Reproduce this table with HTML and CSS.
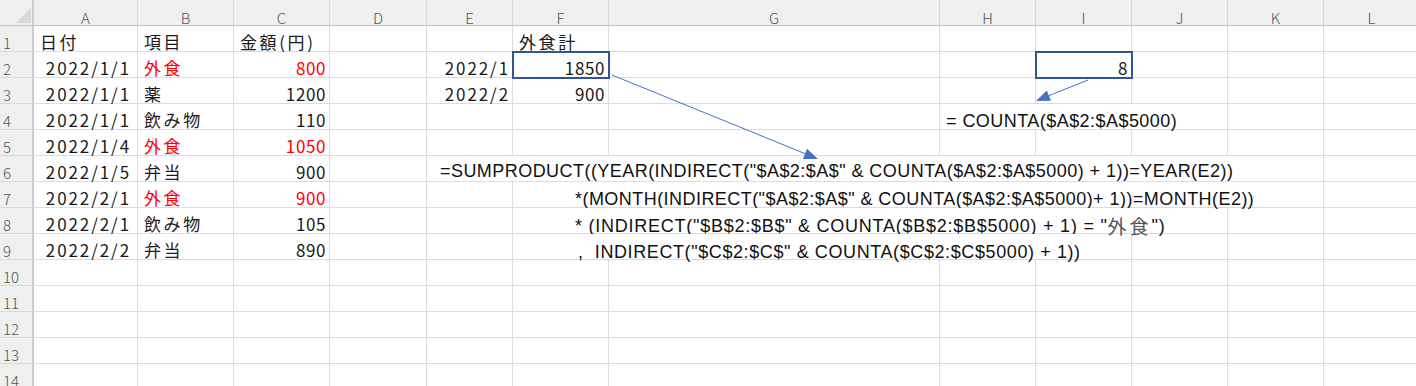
FILE: index.html
```html
<!DOCTYPE html>
<html lang="ja">
<head>
<meta charset="utf-8">
<title>外食計</title>
<link rel="stylesheet" href="styles.css">
</head>
<body>
<div class="sheet">
  <div class="c hd corner"></div><div class="c hd">A</div><div class="c hd">B</div><div class="c hd">C</div><div class="c hd">D</div><div class="c hd">E</div><div class="c hd">F</div><div class="c hd">G</div><div class="c hd">H</div><div class="c hd">I</div><div class="c hd">J</div><div class="c hd">K</div><div class="c hd">L</div>

  <div class="c rh">1</div><div class="c j">日付</div><div class="c j">項目</div><div class="c j">金額(円)</div><div class="c"></div><div class="c"></div><div class="c j">外食計</div><div class="c"></div><div class="c"></div><div class="c"></div><div class="c"></div><div class="c"></div><div class="c"></div>

  <div class="c rh">2</div><div class="c r dt">2022/1/1</div><div class="c j red">外食</div><div class="c r red">800</div><div class="c"></div><div class="c r ym">2022/1</div><div class="c r box">1850</div><div class="c"></div><div class="c"></div><div class="c r box">8</div><div class="c"></div><div class="c"></div><div class="c"></div>

  <div class="c rh">3</div><div class="c r dt">2022/1/1</div><div class="c j">薬</div><div class="c r">1200</div><div class="c"></div><div class="c r ym">2022/2</div><div class="c r">900</div><div class="c"></div><div class="c"></div><div class="c"></div><div class="c"></div><div class="c"></div><div class="c"></div>

  <div class="c rh">4</div><div class="c r dt">2022/1/1</div><div class="c j">飲み物</div><div class="c r">110</div><div class="c"></div><div class="c"></div><div class="c"></div><div class="c"></div><div class="c ovf"><span class="ft f5">= COUNTA($A$2:$A$5000)</span></div><div class="c"></div><div class="c"></div><div class="c"></div><div class="c"></div>

  <div class="c rh">5</div><div class="c r dt">2022/1/4</div><div class="c j red">外食</div><div class="c r red">1050</div><div class="c"></div><div class="c"></div><div class="c"></div><div class="c"></div><div class="c"></div><div class="c"></div><div class="c"></div><div class="c"></div><div class="c"></div>

  <div class="c rh">6</div><div class="c r dt">2022/1/5</div><div class="c j">弁当</div><div class="c r">900</div><div class="c"></div><div class="c ovf"><span class="ft f1">=SUMPRODUCT((YEAR(INDIRECT("$A$2:$A$" &amp; COUNTA($A$2:$A$5000) + 1))=YEAR(E2))</span></div><div class="c"></div><div class="c"></div><div class="c"></div><div class="c"></div><div class="c"></div><div class="c"></div><div class="c"></div>

  <div class="c rh">7</div><div class="c r dt">2022/2/1</div><div class="c j red">外食</div><div class="c r red">900</div><div class="c"></div><div class="c"></div><div class="c ovf"><span class="ft f2">*(MONTH(INDIRECT("$A$2:$A$" &amp; COUNTA($A$2:$A$5000)+ 1))=MONTH(E2))</span></div><div class="c"></div><div class="c"></div><div class="c"></div><div class="c"></div><div class="c"></div><div class="c"></div>

  <div class="c rh">8</div><div class="c r dt">2022/2/1</div><div class="c j">飲み物</div><div class="c r">105</div><div class="c"></div><div class="c"></div><div class="c ovf"><span class="ft f3">* (INDIRECT("$B$2:$B$" &amp; COUNTA($B$2:$B$5000) + 1) = "<span class="jf">外食</span>")</span></div><div class="c"></div><div class="c"></div><div class="c"></div><div class="c"></div><div class="c"></div><div class="c"></div>

  <div class="c rh">9</div><div class="c r dt">2022/2/2</div><div class="c j">弁当</div><div class="c r">890</div><div class="c"></div><div class="c"></div><div class="c ovf"><span class="ft f4">,&nbsp; INDIRECT("$C$2:$C$" &amp; COUNTA($C$2:$C$5000) + 1))</span></div><div class="c"></div><div class="c"></div><div class="c"></div><div class="c"></div><div class="c"></div><div class="c"></div>

  <div class="c rh">10</div><div class="c"></div><div class="c"></div><div class="c"></div><div class="c"></div><div class="c"></div><div class="c"></div><div class="c"></div><div class="c"></div><div class="c"></div><div class="c"></div><div class="c"></div><div class="c"></div>
  <div class="c rh">11</div><div class="c"></div><div class="c"></div><div class="c"></div><div class="c"></div><div class="c"></div><div class="c"></div><div class="c"></div><div class="c"></div><div class="c"></div><div class="c"></div><div class="c"></div><div class="c"></div>
  <div class="c rh">12</div><div class="c"></div><div class="c"></div><div class="c"></div><div class="c"></div><div class="c"></div><div class="c"></div><div class="c"></div><div class="c"></div><div class="c"></div><div class="c"></div><div class="c"></div><div class="c"></div>
  <div class="c rh">13</div><div class="c"></div><div class="c"></div><div class="c"></div><div class="c"></div><div class="c"></div><div class="c"></div><div class="c"></div><div class="c"></div><div class="c"></div><div class="c"></div><div class="c"></div><div class="c"></div>
  <div class="c rh">14</div><div class="c"></div><div class="c"></div><div class="c"></div><div class="c"></div><div class="c"></div><div class="c"></div><div class="c"></div><div class="c"></div><div class="c"></div><div class="c"></div><div class="c"></div><div class="c"></div>

  <svg class="arrows" width="1420" height="390" viewBox="0 0 1420 390">
    <line x1="612" y1="75" x2="806" y2="154" stroke="#4472c4" stroke-width="1"/>
    <polygon points="818,159 803,158.9 807,148.7" fill="#4472c4"/>
    <line x1="1088" y1="80" x2="1049" y2="95.6" stroke="#4472c4" stroke-width="1"/>
    <polygon points="1036,101 1046.8,90.5 1051,100.7" fill="#4472c4"/>
  </svg>
</div>
</body>
</html>
```

FILE: styles.css
```css
html, body {
  margin: 0;
  padding: 0;
  background: #fff;
  overflow: hidden;
}

.sheet {
  position: relative;
  display: grid;
  grid-template-columns: 34px 104px 96px 96px 97px 86px 96px 331px repeat(5, 96px);
  grid-auto-rows: 26px;
  width: 1420px;
  font-family: "Noto Sans CJK JP", sans-serif;
  font-size: 17px;
  color: #1a1a1a;
}

.c {
  box-sizing: border-box;
  border-right: 1px solid #dcdcdc;
  border-bottom: 1px solid #dcdcdc;
  display: flex;
  align-items: flex-end;
  padding: 0 3px 1px 6px;
  line-height: 17px;
  white-space: nowrap;
  overflow: visible;
  letter-spacing: 0.6px;
}

.j {
  letter-spacing: 2.6px;
}

.r {
  justify-content: flex-end;
}

.dt {
  padding-right: 6px;
  letter-spacing: 1.9px;
}

.ym {
  padding-right: 2px;
  letter-spacing: 1.9px;
}

.red {
  color: #ff0000;
}

.hd {
  background: #efefef;
  justify-content: center;
  border-right-color: #d8d8d8;
  border-bottom-color: #c0c0c0;
  font-size: 15px;
  line-height: 15px;
  font-weight: 300;
  color: #555;
  letter-spacing: 0;
  padding: 0;
}

.corner {
  position: relative;
  border-right: 2px solid #cdcdcd;
}

.corner::after {
  content: "";
  position: absolute;
  right: 1px;
  bottom: 2px;
  width: 15px;
  height: 15px;
  background: #d9d9d9;
  clip-path: polygon(100% 0, 100% 100%, 0 100%);
}

.rh {
  background: #efefef;
  border-right: 2px solid #cdcdcd;
  border-bottom-color: #d8d8d8;
  font-size: 15px;
  line-height: 15px;
  font-weight: 300;
  color: #555;
  letter-spacing: 0;
  padding: 0 0 1px 3px;
}

.box {
  position: relative;
  z-index: 2;
}

.box::after {
  content: "";
  position: absolute;
  left: -1px;
  top: -1px;
  right: -2px;
  bottom: -2px;
  border: 2px solid #2f5597;
}

.ovf {
  position: relative;
  z-index: 1;
  padding: 0;
  align-items: flex-start;
}

.ft {
  display: flex;
  align-items: flex-end;
  box-sizing: border-box;
  height: 25px;
  background: #fff;
  font-family: "Liberation Sans", Arial, sans-serif;
  font-size: 18px;
  line-height: 14px;
  letter-spacing: 0.45px;
  color: #111;
  white-space: pre;
  flex-shrink: 0;
}

.jf {
  font-family: "Noto Sans CJK JP", sans-serif;
  font-size: 19px;
  color: #555;
  letter-spacing: 3px;
}

.f1 { padding: 0 4px 3px 13px; }
.f2 { padding: 0 4px 1px 62px; }
.f3 { padding: 0 4px 0 62px; letter-spacing: 0.75px; }
.f4 { padding: 0 4px 0 65px; letter-spacing: 0.6px; }
.f5 { padding: 0 4px 1px 6px; }

.arrows {
  position: absolute;
  left: 0;
  top: 0;
  z-index: 5;
  pointer-events: none;
}
```
